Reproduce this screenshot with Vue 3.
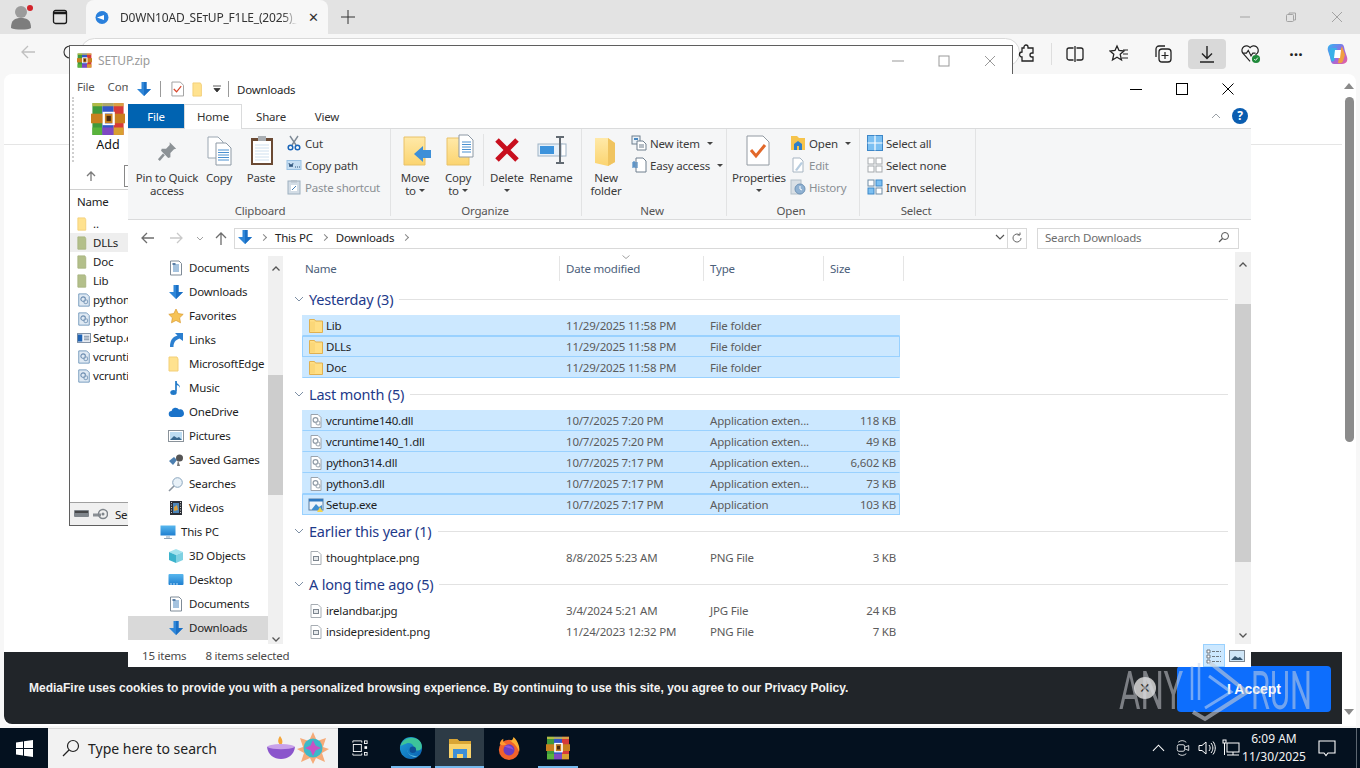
<template>
  <div class="screen">
    <!-- icon sheet -->
    <svg class="defs" aria-hidden="true">
      <defs>
        <linearGradient id="gCop" x1="0" y1="0" x2="1" y2="1"><stop offset="0" stop-color="#2fb7f0"/><stop offset=".5" stop-color="#8f6be8"/><stop offset="1" stop-color="#f0609a"/></linearGradient>
        <linearGradient id="gEdge" x1="0" y1="0" x2="1" y2="1"><stop offset="0" stop-color="#1fa0d8"/><stop offset="1" stop-color="#0a5fb0"/></linearGradient>
        <linearGradient id="gFold" x1="0" y1="0" x2="0" y2="1"><stop offset="0" stop-color="#ffe9a8"/><stop offset="1" stop-color="#fbd470"/></linearGradient>
        <linearGradient id="gMon" x1="0" y1="0" x2="0" y2="1"><stop offset="0" stop-color="#58b7ee"/><stop offset="1" stop-color="#1f7fd0"/></linearGradient>
      </defs>
      <symbol id="folder" viewBox="0 0 16 16"><path d="M1.5 1.5h5l1 1.5h7v11.5h-13z" fill="#ffdf85" stroke="#e0b050"/><path d="M2 3.5h5v10H2z" fill="#fbd778"/></symbol>
      <symbol id="folderOld" viewBox="0 0 16 16"><path d="M1 1h8l1 2v12H1z" fill="#b3bf8a" stroke="#a8b37f"/></symbol>
      <symbol id="folderPale" viewBox="0 0 16 16"><path d="M1 1h8l1 2v12H1z" fill="#ffe28f" stroke="#f3cf78"/></symbol>
      <symbol id="dll" viewBox="0 0 16 16"><path d="M3 1.5h7l3 3v10H3z" fill="#fff" stroke="#9aa3ad"/><circle cx="7.5" cy="7" r="2.4" fill="none" stroke="#8f9aa5" stroke-width="1.2"/><circle cx="10" cy="10" r="2" fill="none" stroke="#a7b0b8" stroke-width="1.2"/></symbol>
      <symbol id="dllOld" viewBox="0 0 16 16"><path d="M2 1h9l3 3v11H2z" fill="#dfe9f3" stroke="#6b92b8"/><circle cx="7" cy="7" r="2.6" fill="none" stroke="#6d8db0" stroke-width="1.2"/><circle cx="10" cy="10" r="2.2" fill="none" stroke="#86a2bf" stroke-width="1.2"/></symbol>
      <symbol id="png" viewBox="0 0 16 16"><path d="M3 1.5h7l3 3v10H3z" fill="#fff" stroke="#a7adb3"/><rect x="5.5" y="6.5" width="5" height="4" fill="#e6e9ec" stroke="#7d868f"/></symbol>
      <symbol id="exe" viewBox="0 0 16 16"><rect x="1" y="2" width="14" height="11" fill="#eef4fa" stroke="#5a7da0"/><rect x="1" y="2" width="14" height="2.5" fill="#2f79c0"/><path d="M4 12l4-5 3 3 3-2v5H4z" fill="#3f8ecf"/><path d="M9 15l3-5 3 5z" fill="#f4d44a"/></symbol>
      <symbol id="exeOld" viewBox="0 0 16 16"><rect x=".5" y="3" width="15" height="10" fill="#eef2f8" stroke="#6b7f96"/><rect x="1" y="4" width="5" height="8" fill="#1f63b4"/><path d="M8 6h6M8 8h6M8 10h6" stroke="#6d7f95"/></symbol>
      <symbol id="dl" viewBox="0 0 16 16"><path d="M5.5 1h5v7h4.500L8 15 1 8h4.500z" fill="#2e86d8"/><path d="M8 1h2.500v7H15l-7 7z" fill="#1a6fc4"/></symbol>
      <symbol id="docs" viewBox="0 0 16 16"><path d="M2.5 1h8.500l2.500 2.500V15h-11z" fill="#fff" stroke="#7f8b97"/><path d="M5 5h6M5 7h6M5 9h6M5 11h6" stroke="#4a86be"/><rect x="4.5" y="3" width="3" height="2" fill="#5a7ea5"/></symbol>
      <symbol id="star" viewBox="0 0 16 16"><path d="M8 1l2.200 4.600 5 .7-3.600 3.500.9 5L8 12.400 3.500 14.800l.9-5L.8 6.300l5-.7z" fill="#f6c356" stroke="#d89a2f" stroke-width=".7"/></symbol>
      <symbol id="links" viewBox="0 0 16 16"><path d="M15 1H7l2.500 2.500C4 5 2 9 2 15h3.500c0-4 1.500-7 6-8.500L15 9z" fill="#2b7fd0"/></symbol>
      <symbol id="music" viewBox="0 0 16 16"><path d="M8 1v10.500" stroke="#2179c8" stroke-width="1.7" fill="none"/><ellipse cx="5.5" cy="12.5" rx="3.2" ry="2.5" fill="#2179c8"/><path d="M8 1c0 3 4.500 3 4 7-.5-2-2-3-4-3z" fill="#2179c8"/></symbol>
      <symbol id="cloud" viewBox="0 0 16 16"><path d="M4 13a3 3 0 0 1-.5-6A4.200 4.200 0 0 1 11 5.500 3.500 3.500 0 0 1 13 13z" fill="#1a72c9"/></symbol>
      <symbol id="pics" viewBox="0 0 16 16"><rect x=".5" y="2.5" width="15" height="11" fill="#fff" stroke="#8a929a"/><rect x="2" y="4" width="12" height="8" fill="#bcdcf2"/><path d="M2 12l4-4 3 2 2-1 3 3z" fill="#38688f"/></symbol>
      <symbol id="games" viewBox="0 0 16 16"><path d="M1 9l5-4 3 3-4 5z" fill="#4c7fb0"/><circle cx="11.5" cy="6" r="3.5" fill="#555"/><path d="M10 8l2 6h-3z" fill="#777"/></symbol>
      <symbol id="search" viewBox="0 0 16 16"><circle cx="9.5" cy="6.5" r="4.8" fill="#e8f1f8" stroke="#8aa5bd"/><path d="M6 10l-5 5" stroke="#8b95a0" stroke-width="1.6"/></symbol>
      <symbol id="videos" viewBox="0 0 16 16"><rect x="2" y="1" width="12" height="14" fill="#2b2f36"/><rect x="5" y="3" width="6" height="10" fill="#4d86b8"/><path d="M6 7l3-2 1 5-4 1z" fill="#d9a03d"/><path d="M3 2.500h1M3 5h1M3 7.500h1M3 10h1M3 12.500h1M12 2.500h1M12 5h1M12 7.500h1M12 10h1M12 12.500h1" stroke="#ccc"/></symbol>
      <symbol id="pc" viewBox="0 0 16 16"><rect x=".5" y="1.5" width="15" height="10" fill="url(#gMon)"/><path d="M6 13h4M4 14.500h8" stroke="#8da4b8"/></symbol>
      <symbol id="obj" viewBox="0 0 16 16"><path d="M8 1l7 3-7 3-7-3z" fill="#a4e3ee"/><path d="M1 4l7 3v8l-7-3z" fill="#3cb3cc"/><path d="M15 4l-7 3v8l7-3z" fill="#7fd1e2"/></symbol>
      <symbol id="desk" viewBox="0 0 16 16"><rect x=".5" y="2" width="15" height="11" rx="1" fill="url(#gMon)"/><path d="M2 12h2M5 12h2M8 12h2" stroke="#bfe0f7"/></symbol>

      <symbol id="pin" viewBox="0 0 32 32"><g transform="translate(5 6) scale(.72)"><path d="M19 3l9 9-3 1-5 5 0 6-3 1-10-10 1-3 6 0 5-5z" fill="#8c9296"/><path d="M11 20L4 28" stroke="#8c9296" stroke-width="3.5"/></g></symbol>
      <symbol id="copy" viewBox="0 0 32 32"><path d="M5 3h10l5 5v16H5z" fill="#fff" stroke="#9ba7b2"/><path d="M13 9h10l5 5v17H13z" fill="#fff" stroke="#8d99a5"/><path d="M15 16h11M15 18.500h11M15 21h11M15 23.500h11M15 26h11" stroke="#4a90d0"/></symbol>
      <symbol id="paste" viewBox="0 0 32 32"><rect x="6" y="4" width="22" height="27" fill="#6b4a34"/><rect x="8" y="7" width="18" height="22" fill="#fff"/><rect x="13" y="2" width="8" height="5" fill="#a9aeb3"/><path d="M10 11h14M10 14h14M10 17h14M10 20h14M10 23h14M10 26h14" stroke="#cfe0ef"/></symbol>
      <symbol id="cut" viewBox="0 0 16 16"><path d="M4 1l6 9M12 1L6 10" stroke="#7e8a96" stroke-width="1.4" fill="none"/><circle cx="4.5" cy="12.5" r="2.3" fill="none" stroke="#1a65b8" stroke-width="1.5"/><circle cx="11.5" cy="12.5" r="2.3" fill="none" stroke="#1a65b8" stroke-width="1.5"/></symbol>
      <symbol id="cpath" viewBox="0 0 16 16"><rect x="1" y="3.5" width="14" height="9" fill="#c7dff3" stroke="#9bc2e3"/><path d="M3 6l1 4 1-3 1 3 1-4" stroke="#33587f" fill="none"/><path d="M9 10h1M11 10h1M13 10h1" stroke="#33587f"/></symbol>
      <symbol id="pshort" viewBox="0 0 16 16"><rect x="2" y="2" width="12" height="13" fill="#d3dde6" stroke="#9eb0c0"/><rect x="5" y="1" width="6" height="2.5" fill="#b7c2cc"/><rect x="5" y="6" width="6" height="6" fill="#fff"/><path d="M6 11l4-4" stroke="#447db3"/></symbol>
      <symbol id="moveto" viewBox="0 0 32 32"><path d="M5 3h21v28H5z" fill="url(#gFold)" stroke="#e9c268"/><path d="M15 20l9-8v4h8v8h-8v4z" fill="#3d8fd8"/></symbol>
      <symbol id="copyto" viewBox="0 0 32 32"><path d="M5 4h22v27H5z" fill="url(#gFold)" stroke="#e9c268"/><path d="M17 1h9l5 5v17H17z" fill="#fff" stroke="#8d99a5"/><path d="M20 8h9M20 10.500h9M20 13h9M20 15.500h9M20 18h9" stroke="#4a90d0"/></symbol>
      <symbol id="del" viewBox="0 0 32 32"><path d="M6 6l20 20M26 6L6 26" stroke="#c80f1e" stroke-width="5"/></symbol>
      <symbol id="rename" viewBox="0 0 32 32"><rect x="3" y="10" width="24" height="12" fill="#e6f0f9" stroke="#9fb3c6"/><rect x="5" y="12" width="14" height="8" fill="#3c93dc"/><rect x="26" y="10" width="5" height="12" fill="#fff" stroke="#9fb3c6"/><path d="M21 3h8M25 3v26M21 29h8" stroke="#626a72" stroke-width="2" fill="none"/></symbol>
      <symbol id="newfolder" viewBox="0 0 32 32"><path d="M5 4h13l7 5v19l-7 4-13-3z" fill="url(#gFold)"/><path d="M18 4l7 5v19l-7 4z" fill="#f0c460"/></symbol>
      <symbol id="newitem" viewBox="0 0 16 16"><rect x="1" y="1" width="8" height="8" fill="#eaf1f7" stroke="#6f7f8e"/><rect x="3" y="3" width="4" height="2" fill="#4a88c0"/><path d="M6 6h6l3 3v6H6z" fill="#fff" stroke="#6f7f8e"/><path d="M8 10h5M8 12h5" stroke="#6f7f8e"/></symbol>
      <symbol id="easy" viewBox="0 0 16 16"><path d="M5 1h7l3 3v11H5z" fill="#fff" stroke="#6f7f8e"/><path d="M1 6h6M1 8h6M1 10h6M3 4v6" stroke="#2d74b8"/></symbol>
      <symbol id="props" viewBox="0 0 32 32"><path d="M4 2h16l6 6v23H4z" fill="#fff" stroke="#929aa2"/><path d="M8 16l5 6 9-11" stroke="#e2682a" stroke-width="3" fill="none"/></symbol>
      <symbol id="open" viewBox="0 0 16 16"><path d="M1 1h6l2 2h6v12H1z" fill="#f6c44c"/><path d="M4 9l4-3 4 3v6H4z" fill="#2f7fc8"/><rect x="7" y="11" width="2" height="4" fill="#f6c44c"/></symbol>
      <symbol id="edit" viewBox="0 0 16 16"><path d="M3 1h7l3 3v11H3z" fill="#fff" stroke="#a7b5c2"/><path d="M5 13l6-8 2 1-6 8z" fill="#b7cde0"/></symbol>
      <symbol id="hist" viewBox="0 0 16 16"><rect x="1" y="1" width="10" height="14" fill="#d9e0e6" stroke="#b4c0ca"/><circle cx="10" cy="10" r="5" fill="#8fb1d2" stroke="#6f93b6"/><path d="M10 7v3l2 1" stroke="#fff" fill="none"/></symbol>
      <symbol id="selall" viewBox="0 0 16 16"><rect x=".5" y=".5" width="15" height="15" fill="#7cc0f2" stroke="#3d87c8"/><path d="M8 .5v15M.5 8h15" stroke="#fff" stroke-width="1.2"/></symbol>
      <symbol id="selnone" viewBox="0 0 16 16"><rect x="1" y="1" width="6" height="6" fill="#fff" stroke="#a5a9ad"/><rect x="9" y="1" width="6" height="6" fill="#fff" stroke="#a5a9ad"/><rect x="1" y="9" width="6" height="6" fill="#fff" stroke="#a5a9ad"/><rect x="9" y="9" width="6" height="6" fill="#fff" stroke="#a5a9ad"/></symbol>
      <symbol id="invert" viewBox="0 0 16 16"><rect x="1" y="1" width="6" height="6" fill="#fff" stroke="#6f8ba5"/><rect x="9" y="1" width="6" height="6" fill="#7cc0f2" stroke="#3d87c8"/><rect x="1" y="9" width="6" height="6" fill="#7cc0f2" stroke="#3d87c8"/><rect x="9" y="9" width="6" height="6" fill="#fff" stroke="#6f8ba5"/></symbol>

      <symbol id="rar" viewBox="0 0 24 32" preserveAspectRatio="none"><rect x="1" y="1" width="7" height="30" fill="#3f9a3c"/><rect x="8" y="1" width="8" height="30" fill="#3357c8"/><rect x="16" y="1" width="7" height="30" fill="#d63a3a"/><rect x="1" y="1" width="22" height="3" fill="#d9c44a" opacity=".75"/><rect x="1" y="24" width="7" height="7" fill="#59b33c"/><rect x="8" y="24" width="8" height="7" fill="#8048c2"/><rect x="16" y="24" width="7" height="7" fill="#d8a030"/><rect x="0" y="11" width="24" height="9" fill="#c9801f"/><rect x="9" y="10" width="7" height="11" fill="none" stroke="#fff" stroke-width="1.6"/><rect x="11" y="13" width="3" height="5" fill="#4a2a12"/></symbol>
      <symbol id="drive" viewBox="0 0 34 12"><rect x="0" y="2" width="15" height="7" rx="1" fill="#7f858b"/><path d="M1 4h13" stroke="#333" stroke-width="1.5"/><path d="M19 7h8" stroke="#8a8f94" stroke-width="3"/><circle cx="29" cy="6" r="4.5" fill="none" stroke="#7f858b" stroke-width="1.5"/><circle cx="29" cy="6" r="1.5" fill="#7f858b"/></symbol>

      <symbol id="avatar" viewBox="0 0 28 28"><circle cx="12" cy="9" r="6" fill="#9b9b9b"/><path d="M2 25c0-8 4-10 10-10s10 2 10 10c-3 2-16 2-20 0z" fill="#7d7d7d"/><circle cx="21" cy="5" r="3" fill="#d3232a"/></symbol>
      <symbol id="tabs" viewBox="0 0 16 16"><rect x="1.5" y="1.5" width="13" height="13" rx="2" fill="none" stroke="#1a1a1a" stroke-width="1.3"/><path d="M1.500 4h13" stroke="#1a1a1a" stroke-width="2.5"/></symbol>
      <symbol id="fav" viewBox="0 0 16 16"><circle cx="8" cy="8.500" r="6.500" fill="#2a80dc"/><path d="M3 8.500L10 6v5z" fill="#fff"/><path d="M9 2l5 3-2 1z" fill="#2a80dc"/></symbol>
      <symbol id="ext" viewBox="0 0 20 20"><path d="M7 3a2 2 0 0 1 4 0v1h5v5h-1a2 2 0 0 0 0 4h1v4H5v-4a2 2 0 0 1 0-5V4h2z" fill="none" stroke="#222" stroke-width="1.3"/></symbol>
      <symbol id="split" viewBox="0 0 20 20"><rect x="2" y="4" width="16" height="12" rx="2" fill="none" stroke="#222" stroke-width="1.3"/><path d="M10 2v16" stroke="#f7f7f7" stroke-width="3"/><path d="M10 2v16" stroke="#222" stroke-width="1.3"/></symbol>
      <symbol id="favs" viewBox="0 0 20 20"><path d="M8 2l2 4.500 5 .5-3.800 3.300L12.500 16 8 13.300 3.500 16l1.300-5.700L1 7l5-.5z" fill="none" stroke="#222" stroke-width="1.3"/><path d="M14 6h5M14 10h5M13 14h6" stroke="#222" stroke-width="1.2"/></symbol>
      <symbol id="coll" viewBox="0 0 20 20"><path d="M3 13V5a3 3 0 0 1 3-3h6" fill="none" stroke="#222" stroke-width="1.3"/><rect x="6" y="5" width="12" height="13" rx="3" fill="none" stroke="#222" stroke-width="1.3"/><path d="M12 8v7M8.500 11.500h7" stroke="#222" stroke-width="1.2"/></symbol>
      <symbol id="down" viewBox="0 0 20 20"><path d="M10 2v12M5 9.500l5 5 5-5M3 18h14" fill="none" stroke="#222" stroke-width="1.4"/></symbol>
      <symbol id="health" viewBox="0 0 22 22"><path d="M10 19L2 10a5 5 0 0 1 8-6 5 5 0 0 1 8 6l-2 2" fill="none" stroke="#222" stroke-width="1.3"/><path d="M2 10h4l2-3 3 6 2-3h3" fill="none" stroke="#222" stroke-width="1.2"/><circle cx="16.5" cy="16.5" r="4.5" fill="#1f8a3a"/><path d="M14.500 16.500l1.500 1.500 2.500-3" stroke="#fff" fill="none"/></symbol>
      <symbol id="copilot" viewBox="0 0 24 24"><path d="M7 2h8c3 0 3 3 4 7l2 6c1 3 0 7-5 7H8c-3 0-3-3-4-7L2 9C1 5 3 2 7 2z" fill="url(#gCop)"/><path d="M5 6h6l-2 10c0 3-3 5-4 2L3 10z" fill="#3ab0e8"/><path d="M16 4l3 9-2 6c-1 3-4 2-5 2l2-12z" fill="#f0a040"/><path d="M9 8h6l-1 8H8z" fill="#fff"/></symbol>

      <symbol id="win" viewBox="0 0 17 17"><path d="M0 2.500l7-1v6.500H0zM8 1.300L17 0v8H8zM0 9h7v6.500l-7-1zM8 9h9v8l-9-1.300z" fill="#fff"/></symbol>
      <symbol id="mag" viewBox="0 0 18 18"><circle cx="11" cy="7" r="5.5" fill="none" stroke="#222" stroke-width="1.2"/><path d="M7 11l-6 6" stroke="#222" stroke-width="1.3"/></symbol>
      <symbol id="diya" viewBox="0 0 30 26"><path d="M14 1c3 4 3 7 1 9-3-1-4-5-1-9z" fill="#f4a63a"/><ellipse cx="15" cy="12" rx="14" ry="3" fill="#c9a2ea"/><path d="M1 12c1 8 7 12 14 12s13-4 14-12c-6 3-22 3-28 0z" fill="#8b55cc"/></symbol>
      <symbol id="rangoli" viewBox="0 0 32 32"><path d="M16 0l4 9 9-3-3 9 6 2-7 4 3 9-9-4-3 6-3-6-9 4 3-9-7-4 6-2-3-9 9 3z" fill="#f6ab78"/><circle cx="16" cy="16" r="9.5" fill="#3db8c8"/><path d="M16 8l2.500 5.500L24 16l-5.500 2.500L16 24l-2.500-5.500L8 16l5.500-2.500z" fill="#c852c4"/></symbol>
      <symbol id="taskv" viewBox="0 0 18 18"><path d="M1 1h10M1 3v-2M11 3v-2M1 17h10M1 15v2M11 15v2" stroke="#fff" fill="none"/><rect x="1.5" y="5" width="9" height="8" fill="none" stroke="#fff"/><rect x="14" y="1" width="3" height="3" fill="none" stroke="#fff"/><rect x="14" y="7" width="3" height="3" fill="#fff"/><rect x="14" y="14" width="3" height="3" fill="none" stroke="#fff"/></symbol>
      <symbol id="edge" viewBox="0 0 26 26"><circle cx="13" cy="13" r="12" fill="url(#gEdge)"/><path d="M1.500 11C4 3 12 0 19 3c5 2 7 8 5 11-2 2-6 2-8 1 1-5-3-9-8-7-3 1-5 2-6.500 3z" fill="#3dc39a"/><path d="M9 15c0 5 6 8 12 6-5 3-11 1-12-6z" fill="#7ed8f0"/><circle cx="15" cy="15" r="3.5" fill="#0e4f95"/></symbol>
      <symbol id="fileex" viewBox="0 0 24 24"><path d="M1 3h8l2 2h12v17H1z" fill="#f9d36b"/><path d="M1 3h8l2 2h12v3H1z" fill="#d9a534"/><path d="M5 13h14v9H5z" fill="#3f8fd6"/><rect x="9" y="18" width="6" height="4" fill="#f9d36b"/></symbol>
      <symbol id="ff" viewBox="0 0 26 26"><circle cx="13" cy="15" r="11" fill="#f2622b"/><path d="M18 1c5 5 7 11 6 16C20 8 16 7 14 5c2 0 3-1 4-4z" fill="#fcb034"/><path d="M3 9c0-3 2-5 4-6-1 3 1 5 4 6-3 1-6 2-8 0z" fill="#ff9b2f"/><circle cx="13" cy="15" r="6" fill="#6a3ec2"/><path d="M8 11c4-2 9 0 10 4-3-2-7-2-10-4z" fill="#8e55d6"/></symbol>
      <symbol id="meet" viewBox="0 0 18 22"><path d="M3 4a8 8 0 0 1 10 0M3 18a8 8 0 0 0 10 0" stroke="#fff" fill="none"/><rect x="2" y="7" width="9" height="8" rx="2" fill="none" stroke="#fff"/><path d="M11 10l5-2v6l-5-2" fill="none" stroke="#fff"/></symbol>
      <symbol id="vol" viewBox="0 0 18 18"><path d="M1 6.500h3L8 3v12l-4-3.500H1z" fill="none" stroke="#fff"/><path d="M11 6c1.500 2 1.500 4 0 6M13 4c2.500 3 2.500 7 0 10M15 2.500c3 4 3 9 0 13" fill="none" stroke="#fff"/></symbol>
      <symbol id="net" viewBox="0 0 18 18"><rect x="5" y="4" width="12" height="9" fill="none" stroke="#fff"/><path d="M5 16h12M11 13v3" stroke="#fff"/><rect x="1" y="1" width="3" height="3" fill="none" stroke="#fff"/><path d="M2.500 4v12" stroke="#fff"/></symbol>
      <symbol id="note" viewBox="0 0 18 18"><path d="M1 2h16v12H10l-2 2.500L6 14H1z" fill="none" stroke="#fff" stroke-width="1.1"/></symbol>
    </svg>

    <!-- browser behind everything -->
    <div class="tabstrip">
      <svg class="i-avatar"><use href="#avatar" /></svg>
      <svg class="i-tabs"><use href="#tabs" /></svg>
      <div class="tab">
        <svg class="i16"><use href="#fav" /></svg>
        <span class="tab-title">D0WN10AD_SEтUP_F1LE_(2025)_P</span>
        <span class="tab-x">✕</span>
      </div>
      <svg class="i-plus" viewBox="0 0 14 14"><path d="M7 0v14M0 7h14" stroke="#333" stroke-width="1" /></svg>
      <div class="win-btns">
        <svg viewBox="0 0 12 12"><path d="M1 6h10" stroke="#a3a3a3" /></svg>
        <svg viewBox="0 0 12 12"><rect x="1.5" y="3.5" width="7" height="7" rx="1" fill="none" stroke="#a3a3a3" /><path d="M4 3.500V2h6.500v7H9" fill="none" stroke="#a3a3a3" /></svg>
        <svg viewBox="0 0 12 12"><path d="M1 1l10 10M11 1L1 11" stroke="#a3a3a3" /></svg>
      </div>
    </div>
    <div class="toolbar">
      <svg class="i-back" viewBox="0 0 16 16"><path d="M15 8H2M8 2L2 8l6 6" fill="none" stroke="#c0c0c0" stroke-width="1.3" /></svg>
      <svg class="i-reload" viewBox="0 0 14 14"><circle cx="7" cy="7" r="6" fill="none" stroke="#333" stroke-width="1.1" /></svg>
      <div class="addr-pill"></div>
      <div class="tb-icons">
        <svg class="i20 tb-ext"><use href="#ext" /></svg>
        <span class="tb-sep"></span>
        <svg class="i20 tb-gap"><use href="#split" /></svg>
        <svg class="i20 tb-gap"><use href="#favs" /></svg>
        <svg class="i20 tb-coll"><use href="#coll" /></svg>
        <span class="tb-active"><svg class="i20"><use href="#down" /></svg></span>
        <svg class="i20"><use href="#health" /></svg>
        <span class="tb-dots">···</span>
        <svg class="i24"><use href="#copilot" /></svg>
      </div>
    </div>
    <div class="page-wrap">
      <div class="page">
        <div class="page-main">
          <div class="page-head"></div>
          <div class="page-fill"></div>
          <div class="cookie">
            <span class="cookie-text">MediaFire uses cookies to provide you with a personalized browsing experience. By continuing to use this site, you agree to our Privacy Policy.</span>
            <span class="cookie-x">✕</span>
            <button class="cookie-btn">I Accept</button>
          </div>
        </div>
        <div class="page-scroll">
          <span class="tri-up"></span>
          <span class="page-thumb"></span>
          <span class="tri-down"></span>
        </div>
      </div>
    </div>
    <div class="taskbar">
      <div class="tk-start"><svg class="i17"><use href="#win" /></svg></div>
      <div class="tk-search">
        <svg class="i18"><use href="#mag" /></svg>
        <span class="tk-search-text">Type here to search</span>
        <svg class="i-diya"><use href="#diya" /></svg>
        <svg class="i-rang"><use href="#rangoli" /></svg>
      </div>
      <div class="tk-btn tk-tv"><svg class="i16"><use href="#taskv" /></svg></div>
      <div class="tk-btn tk-edge on"><svg class="i24"><use href="#edge" /></svg></div>
      <div class="tk-btn tk-ex on active"><svg class="i24"><use href="#fileex" /></svg></div>
      <div class="tk-btn tk-ff"><svg class="i24"><use href="#ff" /></svg></div>
      <div class="tk-btn tk-rar on"><svg class="i24"><use href="#rar" /></svg></div>
      <div class="tray">
        <svg class="i-chev" viewBox="0 0 14 8"><path d="M1 7l6-6 6 6" fill="none" stroke="#fff" stroke-width="1.1" /></svg>
        <svg class="i18"><use href="#meet" /></svg>
        <svg class="i18"><use href="#vol" /></svg>
        <svg class="i18"><use href="#net" /></svg>
        <div class="clock"><span>6:09 AM</span><span>11/30/2025</span></div>
        <svg class="i18 i-note"><use href="#note" /></svg>
        <span class="show-desk"></span>
      </div>
    </div>

    <!-- WinRAR window -->
    <section class="rar-win">
      <div class="rar-title">
        <svg class="i-rarsm"><use href="#rar" /></svg>
        <span class="rar-name">SETUP.zip</span>
        <div class="rar-ctl">
          <svg viewBox="0 0 12 12"><path d="M0 6h12" stroke="#999" /></svg>
          <svg viewBox="0 0 12 12"><rect x="1" y="1" width="10" height="10" fill="none" stroke="#999" /></svg>
          <svg viewBox="0 0 12 12"><path d="M1 1l10 10M11 1L1 11" stroke="#999" /></svg>
        </div>
      </div>
      <div class="rar-menu"><span>File</span><span>Commands</span></div>
      <div class="rar-tools">
        <div class="rar-add"><svg class="i-rarbig"><use href="#rar" /></svg><span>Add</span></div>
      </div>
      <div class="rar-path"><svg viewBox="0 0 12 12"><path d="M6 11V2M2 6l4-4 4 4" fill="none" stroke="#7a7a7a" stroke-width="1.3" /></svg><span class="rar-box"></span></div>
      <div class="rar-cols">Name</div>
      <div class="rar-list">
        <div v-for="r in rarRows" :key="r.name" class="rar-row" :class="{ hl: r.hl }">
          <svg class="i-rarrow"><use :href="'#' + r.icon" /></svg>
          <span>{{ r.name }}</span>
        </div>
      </div>
      <div class="rar-status"><svg class="i-drive"><use href="#drive" /></svg><span>Selected 1 folder</span></div>
    </section>

    <!-- Explorer window -->
    <section class="ex-win">
      <div class="ex-title">
        <svg class="i16"><use href="#dl" /></svg>
        <span class="ex-sep"></span>
        <svg class="i-check" viewBox="0 0 14 16"><path d="M1 .5h9l3.500 3.500v11.500H1z" fill="#fff" stroke="#9a9a9a" /><path d="M3 8l3 3 5-6" fill="none" stroke="#d8452a" stroke-width="1.3" /></svg>
        <svg class="i-qfold"><use href="#folderPale" /></svg>
        <svg class="i-qdrop" viewBox="0 0 8 8"><path d="M0 1h8M1 3.500h6L4 7z" stroke="#333" fill="#333" stroke-width=".8" /></svg>
        <span class="ex-sep"></span>
        <span class="ex-name">Downloads</span>
        <div class="ex-ctl">
          <svg viewBox="0 0 12 12"><path d="M0 6.500h12" stroke="#000" /></svg>
          <svg viewBox="0 0 12 12"><rect x=".5" y=".5" width="11" height="11" fill="none" stroke="#000" /></svg>
          <svg viewBox="0 0 12 12"><path d="M.5.500l11 11M11.500.5l-11 11" stroke="#000" /></svg>
        </div>
      </div>
      <div class="ex-tabs">
        <span class="t-file">File</span>
        <span class="t-home">Home</span>
        <span class="t-plain t-share">Share</span>
        <span class="t-plain t-view">View</span>
        <svg class="i-collapse" viewBox="0 0 10 6"><path d="M1 5l4-4 4 4" fill="none" stroke="#9aa0a6" /></svg>
        <span class="help">?</span>
      </div>
      <div class="ribbon">
        <div v-for="g in ribbon" :key="g.name" class="r-group" :class="g.cls">
          <div class="r-items">
            <template v-for="it in g.items" :key="it.key">
              <span v-if="it.sep" class="r-vsep"></span>
              <div v-else-if="it.big" class="r-big" :style="{ width: it.w + 'px' }">
                <svg class="i32"><use :href="'#' + it.icon" /></svg>
                <span v-for="l in it.lines" :key="l" class="r-line">{{ l }}<i v-if="l === it.caret" class="caret"></i></span>
                <i v-if="it.caretBelow" class="caret below"></i>
              </div>
              <div v-else class="r-small">
                <div v-for="s in it.rows" :key="s.label" class="r-srow" :class="{ off: s.off }">
                  <svg class="i16"><use :href="'#' + s.icon" /></svg>
                  <span>{{ s.label }}</span><i v-if="s.caret" class="caret"></i>
                </div>
              </div>
            </template>
          </div>
          <div class="r-name">{{ g.name }}</div>
        </div>
      </div>
      <div class="ex-nav">
        <svg class="i-nav" viewBox="0 0 14 14"><path d="M14 7H2M7 2L2 7l5 5" fill="none" stroke="#6d6d6d" stroke-width="1.3" /></svg>
        <svg class="i-nav off" viewBox="0 0 14 14"><path d="M0 7h12M7 2l5 5-5 5" fill="none" stroke="#c9c9c9" stroke-width="1.3" /></svg>
        <svg class="i-navchev" viewBox="0 0 8 5"><path d="M1 1l3 3 3-3" fill="none" stroke="#a0a0a0" /></svg>
        <svg class="i-nav up" viewBox="0 0 14 14"><path d="M7 14V2M2 7l5-5 5 5" fill="none" stroke="#6d6d6d" stroke-width="1.3" /></svg>
        <div class="addr">
          <svg class="i16"><use href="#dl" /></svg>
          <i class="crumb first"></i>
          <span>This PC</span>
          <i class="crumb"></i>
          <span>Downloads</span>
          <i class="crumb"></i>
          <svg class="i-adrop" viewBox="0 0 10 6"><path d="M1 1l4 4 4-4" fill="none" stroke="#555" stroke-width="1.2" /></svg>
        </div>
        <div class="addr-ref"><svg viewBox="0 0 12 12"><path d="M10 6a4 4 0 1 1-1.500-3.100M9 .5V3H6.500" fill="none" stroke="#666" /></svg></div>
        <div class="ex-search"><span>Search Downloads</span><svg class="i-smag" viewBox="0 0 12 12"><circle cx="7" cy="5" r="3.5" fill="none" stroke="#555" /><path d="M4.500 7.500L1 11" stroke="#555" stroke-width="1.3" /></svg></div>
      </div>
      <div class="ex-body">
        <aside class="tree">
          <div class="tree-list">
            <div v-for="n in tree" :key="n.label + n.sel" class="tree-row" :class="{ sel: n.sel, top: n.top }">
              <svg class="i16"><use :href="'#' + n.icon" /></svg>
              <span>{{ n.label }}</span>
            </div>
          </div>
          <div class="tree-bar">
            <svg class="i-sbar" viewBox="0 0 8 5"><path d="M.5 4.500L4 1l3.500 3.500" fill="none" stroke="#555" stroke-width="1.3" /></svg>
            <span class="tree-thumb"></span>
            <svg class="i-sbar" viewBox="0 0 8 5"><path d="M.5.500L4 4 7.500.5" fill="none" stroke="#555" stroke-width="1.3" /></svg>
          </div>
        </aside>
        <div class="files">
          <div class="f-head">
            <span class="h-name">Name</span>
            <span class="h-date">Date modified<svg class="i-sort" viewBox="0 0 8 4"><path d="M.5.500L4 3.500 7.500.5" fill="none" stroke="#a0a0a0" /></svg></span>
            <span class="h-type">Type</span>
            <span class="h-size">Size</span>
          </div>
          <div class="f-scroll">
            <template v-for="g in groups" :key="g.title">
              <div class="f-group">
                <svg class="i-gchev" viewBox="0 0 10 6"><path d="M1 1l4 4 4-4" fill="none" stroke="#7d8fa5" /></svg>
                <span class="g-title">{{ g.title }}</span>
                <span class="g-line"></span>
              </div>
              <div v-for="r in g.rows" :key="r.name" class="f-row" :class="{ sel: r.sel, focus: r.focus }">
                <svg class="i16"><use :href="'#' + r.icon" /></svg>
                <span class="c-name">{{ r.name }}</span>
                <span class="c-date">{{ r.date }}</span>
                <span class="c-type">{{ r.type }}</span>
                <span class="c-size">{{ r.size }}</span>
              </div>
            </template>
          </div>
        </div>
        <div class="vbar">
          <svg class="i-sbar" viewBox="0 0 8 5"><path d="M.5 4.500L4 1l3.500 3.500" fill="none" stroke="#555" stroke-width="1.3" /></svg>
          <span class="vthumb"></span>
          <svg class="i-sbar" viewBox="0 0 8 5"><path d="M.5.500L4 4 7.500.5" fill="none" stroke="#555" stroke-width="1.3" /></svg>
        </div>
      </div>
      <div class="ex-status">
        <span>15 items</span>
        <span class="st-sel">8 items selected</span>
        <span class="st-view on">
          <svg viewBox="0 0 16 16"><path d="M1 2h3v3H1zM1 7h3v3H1zM1 12h3v3H1z" fill="#fff" stroke="#6d7780" /><path d="M6 3.500h9M6 8.500h9M6 13.500h9" stroke="#6d7780" stroke-dasharray="3 1" /></svg>
        </span>
        <span class="st-view">
          <svg viewBox="0 0 16 16"><rect x=".5" y="2.5" width="15" height="11" fill="#cfe6f7" stroke="#7d8790" /><path d="M2 12l4-4 3 2 2-1 3 3z" fill="#36556e" /></svg>
        </span>
      </div>
    </section>

    <!-- watermark -->
    <div class="mark">
      <span class="mark-any">ANY</span>
      <svg class="mark-logo" viewBox="0 0 66 62"><path d="M7 6v34M14 3v37" fill="none" stroke="#c8d8ee" stroke-opacity=".55" stroke-width="2.5" /><path d="M24 2l38 30-42 27-12-7" fill="none" stroke="#c8cdd6" stroke-opacity=".6" stroke-width="4" /><path d="M24 16l22 16-26 16" fill="none" stroke="#c8d8ee" stroke-opacity=".55" stroke-width="3" /></svg>
      <span class="mark-run">RUN</span>
    </div>
  </div>
</template>

<script setup>
const rarRows = [
  { name: '..', icon: 'folderPale' },
  { name: 'DLLs', icon: 'folderOld', hl: true },
  { name: 'Doc', icon: 'folderOld' },
  { name: 'Lib', icon: 'folderOld' },
  { name: 'python3.dll', icon: 'dllOld' },
  { name: 'python314.dll', icon: 'dllOld' },
  { name: 'Setup.exe', icon: 'exeOld' },
  { name: 'vcruntime140.dll', icon: 'dllOld' },
  { name: 'vcruntime140_1.dll', icon: 'dllOld' }
]

const ribbon = [
  {
    name: 'Clipboard',
    cls: 'g-clip',
    items: [
      { key: 'pin', big: true, w: 62, icon: 'pin', lines: ['Pin to Quick', 'access'] },
      { key: 'copy', big: true, w: 42, icon: 'copy', lines: ['Copy'] },
      { key: 'paste', big: true, w: 42, icon: 'paste', lines: ['Paste'] },
      {
        key: 'clipS',
        rows: [
          { label: 'Cut', icon: 'cut' },
          { label: 'Copy path', icon: 'cpath' },
          { label: 'Paste shortcut', icon: 'pshort', off: true }
        ]
      }
    ]
  },
  {
    name: 'Organize',
    cls: 'g-org',
    items: [
      { key: 'move', big: true, w: 40, icon: 'moveto', lines: ['Move', 'to'], caret: 'to' },
      { key: 'cto', big: true, w: 46, icon: 'copyto', lines: ['Copy', 'to'], caret: 'to' },
      { key: 's1', sep: true },
      { key: 'del', big: true, w: 42, icon: 'del', lines: ['Delete'], caretBelow: true },
      { key: 'ren', big: true, w: 46, icon: 'rename', lines: ['Rename'] }
    ]
  },
  {
    name: 'New',
    cls: 'g-new',
    items: [
      { key: 'nf', big: true, w: 44, icon: 'newfolder', lines: ['New', 'folder'] },
      {
        key: 'newS',
        rows: [
          { label: 'New item', icon: 'newitem', caret: true },
          { label: 'Easy access', icon: 'easy', caret: true }
        ]
      }
    ]
  },
  {
    name: 'Open',
    cls: 'g-open',
    items: [
      { key: 'prop', big: true, w: 60, icon: 'props', lines: ['Properties'], caretBelow: true },
      {
        key: 'openS',
        rows: [
          { label: 'Open', icon: 'open', caret: true },
          { label: 'Edit', icon: 'edit', off: true },
          { label: 'History', icon: 'hist', off: true }
        ]
      }
    ]
  },
  {
    name: 'Select',
    cls: 'g-sel',
    items: [
      {
        key: 'selS',
        rows: [
          { label: 'Select all', icon: 'selall' },
          { label: 'Select none', icon: 'selnone' },
          { label: 'Invert selection', icon: 'invert' }
        ]
      }
    ]
  }
]

const tree = [
  { label: 'Documents', icon: 'docs' },
  { label: 'Downloads', icon: 'dl' },
  { label: 'Favorites', icon: 'star' },
  { label: 'Links', icon: 'links' },
  { label: 'MicrosoftEdge', icon: 'folderPale' },
  { label: 'Music', icon: 'music' },
  { label: 'OneDrive', icon: 'cloud' },
  { label: 'Pictures', icon: 'pics' },
  { label: 'Saved Games', icon: 'games' },
  { label: 'Searches', icon: 'search' },
  { label: 'Videos', icon: 'videos' },
  { label: 'This PC', icon: 'pc', top: true },
  { label: '3D Objects', icon: 'obj' },
  { label: 'Desktop', icon: 'desk' },
  { label: 'Documents', icon: 'docs', sel: false },
  { label: 'Downloads', icon: 'dl', sel: true }
]

const folderT = { date: '11/29/2025 11:58 PM', type: 'File folder', size: '', icon: 'folder', sel: true }
const dll = (name, date, size) => ({ name, date, size, type: 'Application exten...', icon: 'dll', sel: true })

const groups = [
  {
    title: 'Yesterday (3)',
    rows: [
      { ...folderT, name: 'Lib' },
      { ...folderT, name: 'DLLs', focus: true },
      { ...folderT, name: 'Doc' }
    ]
  },
  {
    title: 'Last month (5)',
    rows: [
      dll('vcruntime140.dll', '10/7/2025 7:20 PM', '118 KB'),
      dll('vcruntime140_1.dll', '10/7/2025 7:20 PM', '49 KB'),
      dll('python314.dll', '10/7/2025 7:17 PM', '6,602 KB'),
      dll('python3.dll', '10/7/2025 7:17 PM', '73 KB'),
      { name: 'Setup.exe', date: '10/7/2025 7:17 PM', type: 'Application', size: '103 KB', icon: 'exe', sel: true, focus: true }
    ]
  },
  {
    title: 'Earlier this year (1)',
    rows: [{ name: 'thoughtplace.png', date: '8/8/2025 5:23 AM', type: 'PNG File', size: '3 KB', icon: 'png' }]
  },
  {
    title: 'A long time ago (5)',
    rows: [
      { name: 'irelandbar.jpg', date: '3/4/2024 5:21 AM', type: 'JPG File', size: '24 KB', icon: 'png' },
      { name: 'insidepresident.png', date: '11/24/2023 12:32 PM', type: 'PNG File', size: '7 KB', icon: 'png' }
    ]
  }
]
</script>

<style>
html, body { margin: 0; }
</style>

<style scoped>
.screen {
  position: relative;
  width: 1360px;
  height: 768px;
  overflow: hidden;
  display: flex;
  flex-direction: column;
  background: #f7f7f7;
  font-family: "Noto Sans", "Open Sans", sans-serif;
  font-size: 11.5px;
  letter-spacing: -.2px;
  color: #1f1f1f;
}
.defs { position: absolute; width: 0; height: 0; }
svg { display: block; flex: none; }
i { display: block; }
.i16 { width: 16px; height: 16px; }
.i17 { width: 17px; height: 17px; }
.i18 { width: 18px; height: 18px; }
.i20 { width: 20px; height: 20px; }
.i24 { width: 24px; height: 24px; }
.i32 { width: 32px; height: 32px; }

/* browser */
.tabstrip { height: 34px; background: #e3e3e3; display: flex; align-items: center; flex: none; }
.i-avatar { width: 28px; height: 28px; margin-left: 9px; }
.i-tabs { width: 16px; height: 16px; margin-left: 15px; }
.tab {
  margin-left: 18px;
  width: 242px;
  height: 34px;
  box-sizing: border-box;
  background: #f7f7f7;
  border-radius: 8px 8px 0 0;
  display: flex;
  align-items: center;
  padding-left: 8px;
  gap: 10px;
}
.tab-title {
  width: 177px;
  white-space: nowrap;
  overflow: hidden;
  color: #333;
  font-size: 12px;
  -webkit-mask-image: linear-gradient(to right, #000 92%, transparent);
  mask-image: linear-gradient(to right, #000 92%, transparent);
}
.tab-x { font-size: 13px; color: #333; margin-left: 1px; }
.i-plus { width: 14px; height: 14px; margin-left: 13px; }
.win-btns { margin-left: auto; display: flex; gap: 34px; padding-right: 17px; }
.win-btns svg { width: 12px; height: 12px; }

.toolbar { height: 36px; flex: none; display: flex; align-items: center; position: relative; }
.i-back { width: 16px; height: 16px; margin-left: 20px; }
.i-reload { width: 14px; height: 14px; margin-left: 27px; }
.addr-pill {
  margin-left: 3px;
  width: 940px;
  height: 29px;
  border: 1px solid #d9d9d9;
  border-radius: 15px;
  background: #fff;
  box-sizing: border-box;
  flex: none;
}
.tb-icons { display: flex; align-items: center; margin: 4px 0 0 -3px; }
.tb-sep { width: 1px; height: 22px; background: #dedede; margin: 0 13px 0 14px; }
.tb-gap { margin-right: 24px; }
.tb-coll { margin-right: 15px; }
.tb-active { width: 38px; height: 30px; background: #d9d9d9; border-radius: 4px; display: flex; align-items: center; justify-content: center; margin-right: 15px; }
.tb-dots { margin: 0 21px 0 26px; font-size: 16px; font-weight: 700; color: #222; width: 18px; text-align: center; letter-spacing: 0; }
.page-wrap { flex: 1; padding: 4px 4px 2px 4px; display: flex; min-height: 0; }
.page { flex: 1; display: flex; background: #fff; border-radius: 8px 8px 0 8px; overflow: hidden; }
.page-main { flex: 1; display: flex; flex-direction: column; }
.page-head { height: 70px; border-bottom: 1px solid #e5e5e5; flex: none; }
.page-fill { flex: 1; }
.cookie {
  height: 72px;
  flex: none;
  margin-bottom: 2px;
  background: #212529;
  border-radius: 0 0 0 8px;
  display: flex;
  align-items: center;
  padding: 0 11px 0 25px;
  color: #fff;
  font-family: "Liberation Sans", Arial, sans-serif;
  font-size: 12px;
  letter-spacing: 0;
  font-weight: 700;
}
.cookie-text { white-space: nowrap; color: #f2f2f2; }
.cookie-x {
  margin-left: auto;
  width: 22px;
  height: 22px;
  border-radius: 50%;
  background: #bdbdbd;
  color: #333;
  font-size: 14px;
  font-weight: 400;
  display: flex;
  align-items: center;
  justify-content: center;
}
.cookie-btn {
  margin: 2px 0 0 21px;
  width: 154px;
  height: 46px;
  border: 0;
  border-radius: 4px;
  background: #0d6efd;
  color: #fff;
  font-family: "Liberation Sans", Arial, sans-serif;
  font-size: 14px;
  font-weight: 700;
}
.page-scroll { width: 14px; flex: none; display: flex; flex-direction: column; align-items: center; }
.tri-up, .tri-down { width: 0; height: 0; border-left: 5px solid transparent; border-right: 5px solid transparent; }
.tri-up { border-bottom: 6px solid #8a8a8a; margin-top: 9px; }
.tri-down { border-top: 6px solid #8a8a8a; margin-top: auto; margin-bottom: 11px; }
.page-thumb { width: 9px; height: 345px; background: #8b8b8b; border-radius: 5px; margin-top: 8px; }

/* taskbar */
.taskbar { height: 40px; flex: none; background: #04111f; display: flex; align-items: stretch; color: #fff; }
.tk-start { width: 48px; display: flex; align-items: center; justify-content: center; }
.tk-search {
  width: 290px;
  background: #f2f2f2;
  display: flex;
  align-items: center;
  color: #222;
  font-size: 14px;
  padding-left: 14px;
  padding-bottom: 1px;
  box-sizing: border-box;
  border-top: 1px solid #d8d8d8;
  letter-spacing: 0;
}
.tk-search-text { margin-left: 8px; }
.i-diya { width: 30px; height: 26px; margin-left: 49px; }
.i-rang { width: 32px; height: 32px; margin-left: 1px; }
.tk-btn { display: flex; align-items: center; justify-content: center; position: relative; box-sizing: border-box; width: 49px; }
.tk-tv { width: 48px; padding-right: 5px; }
.tk-btn.active { background: #2d3b46; }
.tk-btn.on::after { content: ""; position: absolute; left: 0; right: 0; bottom: 0; height: 2px; background: #76b9ed; }
.tk-edge.on::after, .tk-rar.on::after { left: 5px; right: 4px; }
.tray { margin-left: auto; display: flex; align-items: center; padding-right: 3px; }
.i-chev { width: 13px; height: 8px; margin-right: 9px; }
.tray .i18 { margin-right: 6px; }
.clock { display: flex; flex-direction: column; align-items: center; font-size: 12px; letter-spacing: 0; line-height: 18px; width: 56px; margin-right: 16px; color: #f4f4f4; white-space: nowrap; }
.tray .i-note { margin-right: 20px; }
.show-desk { width: 1px; height: 40px; background: #5c6670; }

/* winrar */
.rar-win {
  position: absolute;
  left: 69px;
  top: 45px;
  width: 944px;
  height: 481px;
  background: #fff;
  border: 1px solid #5f5f5f;
  box-sizing: border-box;
  display: flex;
  flex-direction: column;
  color: #222;
}
.rar-title { height: 29px; flex: none; display: flex; align-items: center; padding-left: 7px; }
.i-rarsm { width: 15px; height: 15px; }
.rar-name { margin-left: 6px; color: #9a9a9a; font-size: 12px; }
.rar-ctl { margin-left: auto; display: flex; gap: 34px; padding-right: 16px; }
.rar-ctl svg { width: 12px; height: 12px; }
.rar-menu { height: 22px; flex: none; display: flex; gap: 13px; align-items: center; padding-left: 7px; color: #555; }
.rar-tools { height: 65px; flex: none; padding-left: 17px; border-left: 2px dotted #cfcfcf; margin-left: 2px; box-sizing: border-box; }
.rar-add { width: 34px; display: flex; flex-direction: column; align-items: center; color: #111; }
.i-rarbig { width: 34px; height: 34px; margin-top: 5px; }
.rar-add span { font-size: 12.5px; line-height: 14px; margin-top: 2px; letter-spacing: 0; }
.rar-path { height: 27px; flex: none; display: flex; align-items: center; padding-left: 15px; }
.rar-path svg { width: 12px; height: 12px; }
.rar-box { margin-left: 27px; width: 100px; height: 20px; border: 1px solid #888; background: #fff; }
.rar-cols { height: 23px; flex: none; padding-left: 7px; line-height: 23px; border-top: 1px solid #d0d0d0; color: #222; box-sizing: border-box; }
.rar-list { flex: 1; padding-top: 2px; }
.rar-row { height: 19px; display: flex; align-items: center; gap: 2px; padding-left: 7px; }
.i-rarrow { width: 14px; height: 16px; }
.rar-row.hl { background: #eeeeee; }
.rar-status { height: 22px; flex: none; border-top: 1px solid #a0a0a0; background: #f0f0f0; display: flex; align-items: center; padding-left: 4px; }
.i-drive { width: 34px; height: 12px; }
.rar-status span { margin-left: 7px; }

/* explorer */
.ex-win {
  position: absolute;
  left: 128px;
  top: 74px;
  width: 1123px;
  height: 593px;
  background: #fff;
  display: flex;
  flex-direction: column;
}
.ex-title { height: 30px; flex: none; display: flex; align-items: center; padding-left: 8px; }
.ex-sep { width: 1px; height: 16px; background: #9a9a9a; margin: 0 8px; }
.i-check { width: 13px; height: 16px; margin-left: 2px; }
.i-qfold { width: 15px; height: 17px; margin-left: 8px; }
.i-qdrop { width: 8px; height: 8px; margin-left: 6px; margin-right: -1px; }
.ex-ctl { margin-left: auto; display: flex; gap: 34px; padding-right: 17px; }
.ex-ctl svg { width: 12px; height: 12px; }
.ex-tabs { height: 25px; flex: none; display: flex; align-items: stretch; border-bottom: 1px solid #dadbdc; box-sizing: border-box; position: relative; line-height: 25px; color: #333; }
.t-file { width: 56px; background: #0063b1; color: #fff; text-align: center; }
.t-home { width: 58px; border: 1px solid #dadbdc; border-bottom: 0; background: #fff; box-sizing: border-box; height: 25px; text-align: center; line-height: 24px; }
.t-plain { text-align: center; }
.t-share { width: 58px; }
.t-view { width: 54px; }
.i-collapse { width: 10px; height: 6px; margin: auto 11px auto auto; }
.help { width: 16px; height: 16px; margin: auto 3px auto 0; border-radius: 50%; background: #0a5db0; color: #fff; text-align: center; line-height: 16px; font-size: 12px; font-weight: 700; }

.ribbon { height: 91px; flex: none; background: #f5f6f7; border-bottom: 1px solid #dadbdc; box-sizing: border-box; display: flex; color: #3b3b3b; }
.r-group { display: flex; flex-direction: column; border-right: 1px solid #e2e3e4; box-sizing: border-box; padding-top: 5px; margin-bottom: 3px; }
.g-clip { width: 263px; padding-left: 8px; }
.g-org { width: 191px; padding-left: 4px; }
.g-new { width: 145px; padding-left: 2px; }
.g-open { width: 133px; padding-left: 2px; }
.g-sel { width: 116px; padding-left: 7px; }
.r-items { height: 70px; display: flex; flex: none; }
.r-name { text-align: center; line-height: 14px; color: #555; margin-left: -6px; }
.g-sel .r-name { margin-left: -10px; }
.r-big { display: flex; flex-direction: column; align-items: center; flex: none; }
.r-big .i32 { margin-bottom: 5px; }
.r-line { line-height: 13px; white-space: nowrap; display: flex; align-items: center; gap: 3px; }
.caret { width: 0; height: 0; border-left: 3px solid transparent; border-right: 3px solid transparent; border-top: 3px solid #444; }
.caret.below { margin-top: 5px; }
.r-vsep { width: 1px; height: 52px; background: #e2e3e4; margin: 0 2px; flex: none; }
.r-small { margin-left: 4px; margin-top: -2px; display: flex; flex-direction: column; }
.g-new .r-small { margin-left: 3px; }
.g-open .r-small { margin-left: 1px; }
.g-sel .r-small { margin-left: 0; }
.r-srow { height: 22px; display: flex; align-items: center; gap: 3px; white-space: nowrap; }
.r-srow .caret { margin-left: 4px; }
.r-srow.off span { color: #8a8f94; }

.ex-nav { height: 32px; flex: none; display: flex; align-items: center; padding: 4px 0 0 12px; box-sizing: border-box; }
.i-nav { width: 14px; height: 14px; margin-right: 16px; }
.i-nav.up { margin-right: 6px; }
.i-navchev { width: 8px; height: 5px; margin: 0 10px 0 -4px; }
.addr {
  width: 774px;
  height: 21px;
  border: 1px solid #d9d9d9;
  box-sizing: border-box;
  display: flex;
  align-items: center;
  padding: 0 0 2px 2px;
  color: #222;
  gap: 9px;
}
.crumb { width: 4px; height: 4px; border-top: 1px solid #888; border-right: 1px solid #888; transform: rotate(45deg); }
.crumb.first { margin-left: -1px; }
.i-adrop { width: 10px; height: 6px; margin-left: auto; margin-right: 2px; }
.addr-ref { width: 19px; height: 21px; border: 1px solid #d9d9d9; border-left: 0; box-sizing: border-box; display: flex; align-items: center; justify-content: center; }
.addr-ref svg { width: 12px; height: 12px; }
.ex-search { width: 202px; height: 21px; margin-left: 10px; border: 1px solid #d9d9d9; box-sizing: border-box; display: flex; align-items: center; padding: 0 8px 2px 7px; color: #6d6d6d; }
.i-smag { width: 12px; height: 12px; margin-left: auto; }

.ex-body { height: 392px; flex: none; display: flex; }
.tree { width: 155px; flex: none; display: flex; }
.tree-list { width: 140px; flex: none; padding-top: 4px; }
.tree-row { height: 24px; display: flex; align-items: center; gap: 5px; padding-left: 40px; white-space: nowrap; box-sizing: border-box; padding-bottom: 1px; }
.tree-row.top { padding-left: 32px; }
.tree-row.sel { background: #d9d9d9; }
.tree-bar, .vbar { background: #f0f0f0; display: flex; flex-direction: column; align-items: center; padding-top: 10px; box-sizing: border-box; }
.tree-bar { width: 15px; flex: none; padding-bottom: 2px; margin-top: 4px; }
.i-sbar { width: 8px; height: 5px; }
.tree-thumb { width: 15px; height: 120px; background: #cdcdcd; margin-top: 104px; margin-bottom: auto; }
.files { flex: 1; min-width: 0; display: flex; flex-direction: column; }
.f-head { height: 31px; flex: none; display: flex; align-items: center; color: #4c607a; position: relative; }
.f-head > span { height: 25px; line-height: 25px; box-sizing: border-box; flex: none; position: relative; padding-left: 6px; border-right: 1px solid #e5e5e5; margin-top: 2px; }
.h-name { margin-left: 16px; width: 261px; }
.h-date { width: 144px; }
.h-type { width: 120px; }
.h-size { width: 80px; }
.i-sort { position: absolute; left: 62px; top: -1px; width: 8px; height: 4px; }
.f-scroll { flex: 1; overflow: hidden; min-height: 0; }
.f-group { height: 32px; display: flex; align-items: center; padding-left: 11px; }
.i-gchev { width: 10px; height: 6px; }
.g-title { color: #1e3a8a; font-size: 14.5px; margin-left: 5px; white-space: nowrap; }
.g-line { flex: 1; height: 1px; background: #e2e2e2; margin: 1px 7px 0 6px; }
.f-row { height: 21px; width: 598px; margin-left: 19px; display: flex; align-items: center; padding-left: 5px; box-sizing: border-box; border: 1px solid transparent; color: #5c5c5c; white-space: nowrap; }
.f-row.sel { background: #cce8ff; border-color: #cce8ff; border-bottom-color: #99d1ff; }
.f-row.focus { border-color: #99d1ff; }
.f-row .i16 { margin-right: 2px; }
.c-name { width: 240px; color: #1f1f1f; }
.c-date { width: 144px; }
.c-type { width: 105px; }
.c-size { width: 81px; text-align: right; }
.vbar { width: 16px; flex: none; background: #f0f0f0; padding-top: 10px; padding-bottom: 6px; }
.vthumb { width: 16px; height: 258px; background: #cdcdcd; margin-top: 37px; margin-bottom: auto; }
.ex-status { height: 23px; flex: none; display: flex; align-items: center; padding-left: 14px; color: #4a4a4a; }
.st-sel { margin-left: 19px; }
.st-view { width: 22px; height: 23px; box-sizing: border-box; display: flex; align-items: center; justify-content: center; border: 1px solid transparent; }
.st-view svg { width: 16px; height: 16px; }
.st-view.on { margin-left: auto; background: #cce8ff; border-color: #99d1ff; }
.st-view:last-child { width: 18px; margin-right: 5px; margin-left: 3px; }

/* ANY.RUN watermark */
.mark { position: absolute; left: 1119px; top: 660px; width: 210px; height: 62px; display: flex; align-items: center; pointer-events: none; color: rgba(215, 218, 224, .5); font-family: Roboto, sans-serif; font-weight: 400; letter-spacing: 0; font-size: 53px; line-height: 62px; }
.mark-any, .mark-run { display: block; transform-origin: left center; white-space: nowrap; width: 60px; flex: none; }
.mark-any { transform: scaleX(.62); }
.mark-run { transform: scaleX(.58); }
.mark-logo { width: 66px; height: 62px; margin-left: 6px; flex: none; }
</style>
